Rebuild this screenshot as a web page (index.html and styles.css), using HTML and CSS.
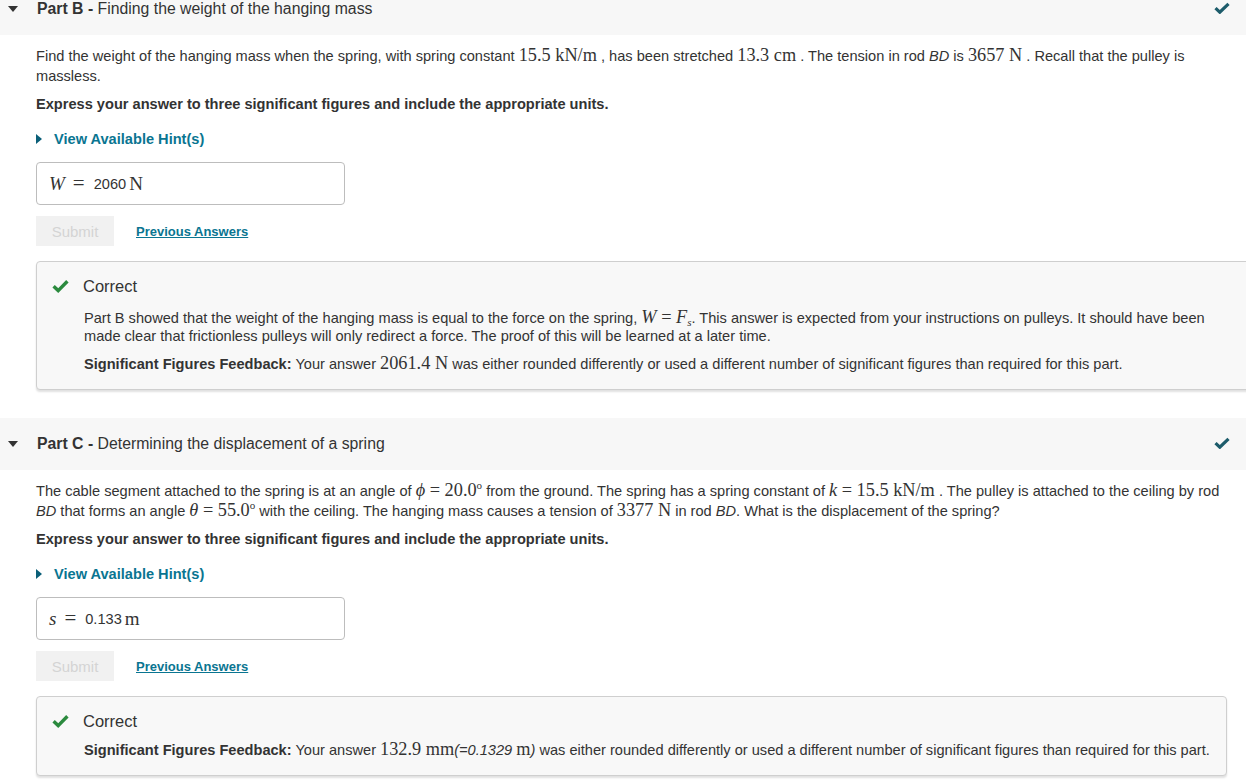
FILE: index.html
```html
<!DOCTYPE html>
<html>
<head>
<meta charset="utf-8">
<link rel="stylesheet" href="styles.css">
</head>
<body>
<div class="page">
  <section class="part part-b">
    <div class="part-header">
      <span class="caret"></span>
      <span class="part-title"><b>Part B -</b> Finding the weight of the hanging mass</span>
      <svg class="done" width="16" height="12" viewBox="0 0 16 12"><path d="M1.5 6.2 L5.8 10.2 L14.5 1.8" fill="none" stroke="#1d5c6b" stroke-width="3.2" stroke-linejoin="miter"/></svg>
    </div>
    <div class="part-body">
      <p class="prompt">Find the weight of the hanging mass when the spring, with spring constant <span class="m">15.5 kN/m</span> , has been stretched <span class="m">13.3 cm</span> . The tension in rod <i>BD</i> is <span class="m">3657 N</span> . Recall that the pulley is<br>massless.</p>
      <p class="instr">Express your answer to three significant figures and include the appropriate units.</p>
      <div class="hint"><span class="hcaret"></span>View Available Hint(s)</div>
      <div class="answer"><span class="m mi">W</span><span class="m eq">=</span><span class="val">2060</span><span class="m unit">N</span></div>
      <div class="actions"><span class="submit">Submit</span><a class="prev">Previous Answers</a></div>
      <div class="feedback wide">
        <div class="fb-title"><svg class="ok" width="17" height="14" viewBox="0 0 17 14"><path d="M1.6 7.2 L6.2 11.6 L15.4 2.2" fill="none" stroke="#2b8a3e" stroke-width="3.4"/></svg>Correct</div>
        <p class="fb-text">Part B showed that the weight of the hanging mass is equal to the force on the spring, <span class="m"><i>W</i> = <i>F<sub>s</sub></i></span>. This answer is expected from your instructions on pulleys. It should have been<br>made clear that frictionless pulleys will only redirect a force. The proof of this will be learned at a later time.</p>
        <p class="fb-text sig"><b>Significant Figures Feedback:</b> Your answer <span class="m">2061.4 N</span> was either rounded differently or used a different number of significant figures than required for this part.</p>
      </div>
    </div>
  </section>

  <section class="part part-c">
    <div class="part-header">
      <span class="caret"></span>
      <span class="part-title"><b>Part C -</b> Determining the displacement of a spring</span>
      <svg class="done" width="16" height="12" viewBox="0 0 16 12"><path d="M1.5 6.2 L5.8 10.2 L14.5 1.8" fill="none" stroke="#1d5c6b" stroke-width="3.2" stroke-linejoin="miter"/></svg>
    </div>
    <div class="part-body">
      <p class="prompt">The cable segment attached to the spring is at an angle of <span class="m"><i>ϕ</i> = 20.0<sup>o</sup></span> from the ground. The spring has a spring constant of <span class="m"><i>k</i> = 15.5 kN/m</span> . The pulley is attached to the ceiling by rod<br><i>BD</i> that forms an angle <span class="m"><i>θ</i> = 55.0<sup>o</sup></span> with the ceiling. The hanging mass causes a tension of <span class="m">3377 N</span> in rod <i>BD</i>. What is the displacement of the spring?</p>
      <p class="instr">Express your answer to three significant figures and include the appropriate units.</p>
      <div class="hint"><span class="hcaret"></span>View Available Hint(s)</div>
      <div class="answer"><span class="m mi">s</span><span class="m eq">=</span><span class="val">0.133</span><span class="m unit">m</span></div>
      <div class="actions"><span class="submit">Submit</span><a class="prev">Previous Answers</a></div>
      <div class="feedback">
        <div class="fb-title"><svg class="ok" width="17" height="14" viewBox="0 0 17 14"><path d="M1.6 7.2 L6.2 11.6 L15.4 2.2" fill="none" stroke="#2b8a3e" stroke-width="3.4"/></svg>Correct</div>
        <p class="fb-text sig"><b>Significant Figures Feedback:</b> Your answer <span class="m">132.9 mm</span><i>(=0.1329 </i><span class="m">m</span><i>)</i> was either rounded differently or used a different number of significant figures than required for this part.</p>
      </div>
    </div>
  </section>
</div>
</body>
</html>
```

FILE: styles.css
```css
html, body {
  margin: 0;
  padding: 0;
  background: #fff;
  overflow: hidden;
}
body {
  font-family: "Liberation Sans", Arial, sans-serif;
  color: #333;
  font-size: 14.6px;
  width: 1246px;
  height: 782px;
}
.page {
  margin-top: -17px;
}
.part-header {
  height: 52px;
  background: #f7f7f7;
  display: flex;
  align-items: center;
  font-size: 15.8px;
}
.caret {
  width: 0;
  height: 0;
  border-left: 5.5px solid transparent;
  border-right: 5.5px solid transparent;
  border-top: 6px solid #333;
  margin-left: 8px;
  margin-right: 19px;
}
.done {
  margin-left: auto;
  margin-right: 16px;
  margin-top: -2px;
}
.part-body {
  padding: 11px 0 0 36px;
}
.part-b .part-body {
  padding-bottom: 28px;
}
p { margin: 0; }
.prompt {
  line-height: 19.5px;
}
.part-c .prompt {
  line-height: 19px;
}
.m {
  font-family: "Liberation Serif", "Times New Roman", serif;
  font-size: 18.3px;
  line-height: 1;
}
.m sup {
  font-size: 11px;
  vertical-align: 7px;
  line-height: 0;
}
.m sub {
  font-size: 11px;
  vertical-align: -3px;
  line-height: 0;
}
.instr {
  font-weight: bold;
  margin-top: 8px;
  line-height: 20px;
}
.hint {
  margin-top: 15px;
  color: #0a7591;
  font-weight: bold;
  font-size: 14.6px;
  line-height: 20px;
  display: flex;
  align-items: center;
}
.hcaret {
  width: 0;
  height: 0;
  border-top: 5px solid transparent;
  border-bottom: 5px solid transparent;
  border-left: 6px solid #0a5f78;
  margin-right: 12px;
}
.answer {
  margin-top: 13px;
  border: 1px solid #bdbdbd;
  border-radius: 4px;
  display: flex;
  align-items: center;
  padding-left: 12px;
  box-sizing: border-box;
  height: 43px;
  width: 309px;
}
.answer .mi { font-style: italic; font-size: 19px; }
.answer .eq { margin: 0 9px 0 8px; font-size: 21px; }
.answer .val { font-size: 14.6px; margin-right: 3px; }
.answer .unit { font-size: 19px; }
.actions {
  margin-top: 11px;
  display: flex;
  align-items: center;
}
.submit {
  width: 78px;
  height: 30px;
  background: #f1f1f1;
  color: #d4d4d4;
  font-size: 15px;
  display: flex;
  align-items: center;
  justify-content: center;
}
.prev {
  margin-left: 22px;
  color: #0a7591;
  font-weight: bold;
  font-size: 13px;
  text-decoration: underline;
}
.feedback {
  margin-top: 15px;
  margin-right: 19px;
  background: #f8f8f8;
  border: 1px solid #cfcfcf;
  border-radius: 4px;
  box-shadow: 0 2px 2px rgba(0,0,0,0.12);
  padding: 14px 16px 15px 16px;
}
.feedback.wide {
  margin-right: -40px;
}
.fb-title {
  font-size: 16.5px;
  line-height: 20px;
  display: flex;
  align-items: center;
}
.ok {
  margin-right: 14px;
  margin-left: -1px;
}
.fb-text {
  margin-left: 31px;
  line-height: 18px;
  margin-top: 12px;
}
.fb-text.sig {
  margin-top: 9px;
  line-height: 20px;
}
```
